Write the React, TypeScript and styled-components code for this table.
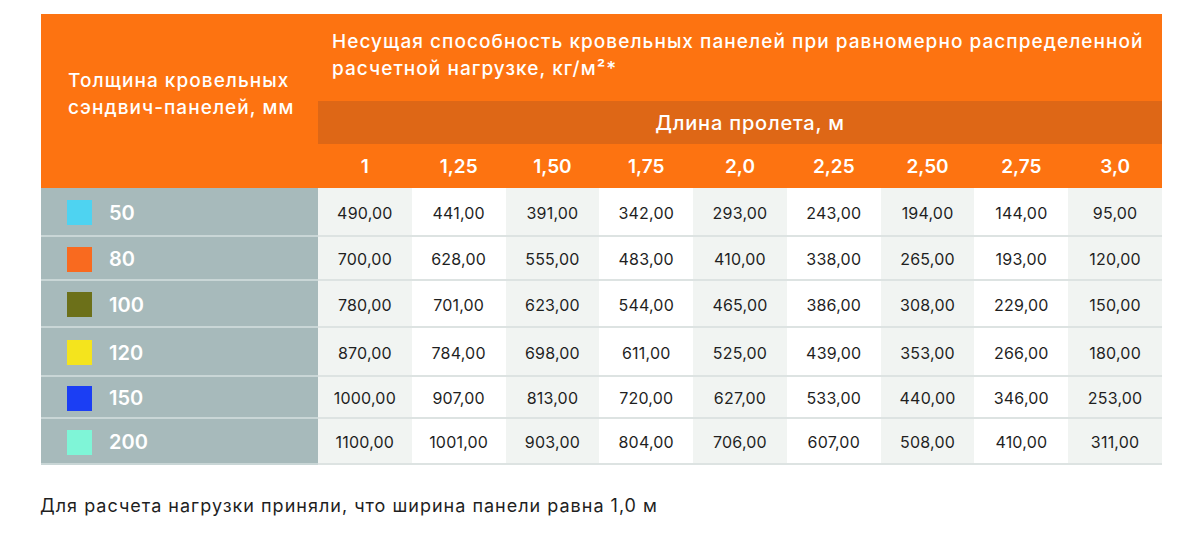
import React from 'react'
import styled, { createGlobalStyle } from 'styled-components'

const COLORS = {
  orange: '#fd7311',
  orangeDark: '#de6716',
  slate: '#a7babb',
  slateLine: '#c9d6d6',
  cellGray: '#f1f4f2',
  line: '#dde3e2',
  text: '#1f1f1f',
}

const GlobalStyle = createGlobalStyle`
  body {
    margin: 0;
    background: #fff;
    font-family: Inter, "Open Sans", sans-serif;
  }
`

const SPANS = ['1', '1,25', '1,50', '1,75', '2,0', '2,25', '2,50', '2,75', '3,0']

const ROWS = [
  { size: '50', color: '#4ed3f1', values: ['490,00', '441,00', '391,00', '342,00', '293,00', '243,00', '194,00', '144,00', '95,00'] },
  { size: '80', color: '#f96a1f', values: ['700,00', '628,00', '555,00', '483,00', '410,00', '338,00', '265,00', '193,00', '120,00'] },
  { size: '100', color: '#6c7019', values: ['780,00', '701,00', '623,00', '544,00', '465,00', '386,00', '308,00', '229,00', '150,00'] },
  { size: '120', color: '#f4e41d', values: ['870,00', '784,00', '698,00', '611,00', '525,00', '439,00', '353,00', '266,00', '180,00'] },
  { size: '150', color: '#1b3ef4', values: ['1000,00', '907,00', '813,00', '720,00', '627,00', '533,00', '440,00', '346,00', '253,00'] },
  { size: '200', color: '#7ff5d7', values: ['1100,00', '1001,00', '903,00', '804,00', '706,00', '607,00', '508,00', '410,00', '311,00'] },
]

const Page = styled.div`
  padding: 14px 38px 0 41px;
`

// header rows, then the six body rows
const Table = styled.div`
  display: grid;
  grid-template-columns: 277px repeat(9, 1fr);
  grid-template-rows: 87px 43px 44px 49px 44px 47px 49px 42px 46px;
  width: 1121px;
`

const CornerCell = styled.div`
  grid-row: 1 / span 3;
  grid-column: 1;
  background: ${COLORS.orange};
  color: #fff;
  font-size: 19px;
  font-weight: 500;
  letter-spacing: 1.05px;
  line-height: 27px;
  display: flex;
  align-items: center;
  padding: 0 0 14px 27px;
`

const TitleCell = styled.div`
  grid-column: 2 / span 9;
  background: ${COLORS.orange};
  color: #fff;
  font-size: 19px;
  font-weight: 500;
  letter-spacing: 1.05px;
  line-height: 27px;
  padding: 14px 0 0 14px;
  white-space: nowrap;
`

const BandCell = styled.div`
  grid-column: 2 / span 9;
  background: ${COLORS.orangeDark};
  color: #fff;
  font-size: 20px;
  font-weight: 500;
  letter-spacing: 0.8px;
  display: flex;
  align-items: center;
  justify-content: center;
  padding-left: 20px;
`

const SpanCell = styled.div`
  background: ${COLORS.orange};
  color: #fff;
  font-size: 19px;
  font-weight: 600;
  display: flex;
  align-items: center;
  justify-content: center;
`

const SizeCell = styled.div`
  background: ${COLORS.slate};
  border-bottom: 2px solid ${COLORS.slateLine};
  display: flex;
  align-items: center;
  gap: 17px;
  padding: 2px 0 0 26px;
  color: #fff;
  font-size: 20px;
  font-weight: 600;
`

const Swatch = styled.span<{ $color: string }>`
  width: 25px;
  height: 25px;
  background: ${p => p.$color};
`

const ValueCell = styled.div<{ $shaded: boolean }>`
  background: ${p => (p.$shaded ? COLORS.cellGray : '#fff')};
  border-bottom: 2px solid ${COLORS.line};
  display: flex;
  align-items: center;
  justify-content: center;
  padding-top: 2px;
  color: ${COLORS.text};
  font-size: 16px;
  font-weight: 400;
  letter-spacing: 0.2px;
`

const Note = styled.p`
  margin: 30px 0 0 -1px;
  font-size: 18px;
  letter-spacing: 1px;
  color: ${COLORS.text};
`

function App() {
  return (
    <>
      <GlobalStyle />
      <Page>
        <Table>
          <CornerCell>Толщина кровельных<br />сэндвич-панелей, мм</CornerCell>
          <TitleCell>
            Несущая способность кровельных панелей при равномерно распределенной<br />расчетной нагрузке, кг/м²*
          </TitleCell>
          <BandCell>Длина пролета, м</BandCell>
          {SPANS.map(s => <SpanCell key={s}>{s}</SpanCell>)}
          {ROWS.map(row => (
            <React.Fragment key={row.size}>
              <SizeCell>
                <Swatch $color={row.color} />
                {row.size}
              </SizeCell>
              {row.values.map((v, i) => (
                <ValueCell key={i} $shaded={i % 2 === 0}>{v}</ValueCell>
              ))}
            </React.Fragment>
          ))}
        </Table>
        <Note>Для расчета нагрузки приняли, что ширина панели равна 1,0 м</Note>
      </Page>
    </>
  )
}

export default App
